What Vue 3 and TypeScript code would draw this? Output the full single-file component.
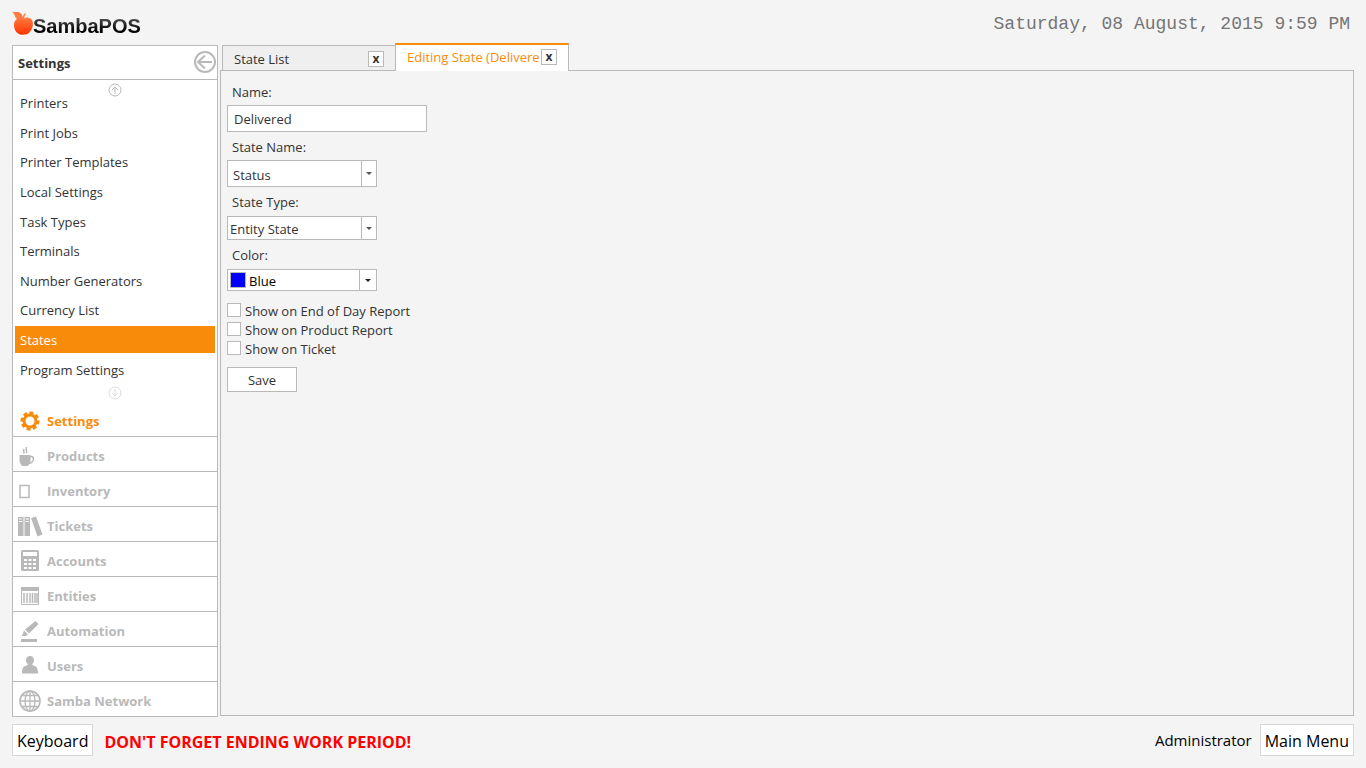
<script setup lang="ts">
import { ref } from 'vue'

interface Option { label: string; checked: boolean }

const settings: string[] = [
  'Printers', 'Print Jobs', 'Printer Templates', 'Local Settings', 'Task Types',
  'Terminals', 'Number Generators', 'Currency List', 'States', 'Program Settings',
]
const selected = ref('States')

const sections: string[] = [
  'Settings', 'Products', 'Inventory', 'Tickets', 'Accounts',
  'Entities', 'Automation', 'Users', 'Samba Network',
]
const section = ref('Settings')

const name = ref('Delivered')
const stateName = ref('Status')
const stateType = ref('Entity State')
const color = ref('Blue')
const options = ref<Option[]>([
  { label: 'Show on End of Day Report', checked: false },
  { label: 'Show on Product Report', checked: false },
  { label: 'Show on Ticket', checked: false },
])
</script>

<template>
  <div class="page">
    <header class="top">
      <div class="logo">
        <svg class="apple" width="24" height="26" viewBox="0 0 24 26" aria-hidden="true">
          <defs>
            <linearGradient id="fruit" x1="0" y1="0" x2="0" y2="1">
              <stop offset="0" stop-color="#ff7a40" />
              <stop offset="1" stop-color="#ff3300" />
            </linearGradient>
          </defs>
          <path d="M0 .5C2.500 1.500 6.500 0 9 2.500c1.500 1.500 2 3.500 2.200 6C8 9.500 4 8.500 3 5.500 2.500 3.500 1.500 2 0 .5z" fill="#ff7a45" />
          <path d="M11.500 8.500C11.500 5 12 3.500 13.500 2.500" fill="none" stroke="#ff7a45" stroke-width="1.500" />
          <path d="M11.500 8C14 5.500 18.500 6 20.300 9.500c1.500 4.500 0 9.500-3.500 12.500-1.500 1.200-2.500 1.500-3.800 1.500s-1.500.3-2.500.3-2-.3-3-.6C4 22 1.800 17.500 2 13.500c.5-5 5-8 9.500-5.500z" fill="url(#fruit)" />
        </svg>
        <span class="brand">SambaPOS</span>
      </div>
      <time class="clock" datetime="2015-08-08T21:59">Saturday, 08 August, 2015 9:59 PM</time>
    </header>

    <main class="body">
      <aside class="sidebar">
        <div class="side-head">
          <h1>Settings</h1>
          <button class="plain" type="button" aria-label="Back">
            <svg width="24" height="24" viewBox="0 0 24 24" fill="none" stroke="#b9b9b9" stroke-width="2">
              <circle cx="12" cy="11" r="10" /><path d="M19 11H5.500M12 4.500 5 11l7 6.500" />
            </svg>
          </button>
        </div>
        <div class="scroller">
          <button class="plain scroll" type="button" aria-label="Scroll up">
            <svg width="14" height="14" viewBox="0 0 14 14" fill="none" stroke="#b9b9b9">
              <circle cx="7" cy="7" r="6" /><path d="M7 11V4M4 7l3-3 3 3" />
            </svg>
          </button>
          <div class="viewport">
            <ul class="items">
              <li v-for="item in settings" :key="item">
                <button type="button" class="item" :class="{ active: item === selected }" @click="selected = item">{{ item }}</button>
              </li>
            </ul>
          </div>
          <button class="plain scroll down" type="button" aria-label="Scroll down">
            <svg width="14" height="14" viewBox="0 0 14 14" fill="none" stroke="#dcdcdc">
              <circle cx="7" cy="7" r="6" /><path d="M7 3v7M4 7l3 3 3-3" />
            </svg>
          </button>
        </div>
        <nav class="sections">
          <button v-for="s in sections" :key="s" type="button" class="section" :class="{ active: s === section }" @click="section = s">
            <svg class="icon" width="28" height="24" viewBox="0 0 28 24" aria-hidden="true">
              <g v-if="s === 'Settings'" fill="none" stroke="currentColor">
                <circle cx="14" cy="12" r="6" stroke-width="3" />
                <path d="M14 5.500V2.500M14 18.500v3M7.500 12h-3M20.500 12h3M9.400 7.400 7.300 5.300M18.600 16.600l2.100 2.100M18.600 7.400l2.100-2.100M9.400 16.600l-2.100 2.100" stroke-width="4" transform="rotate(10 14 12)" />
              </g>
              <g v-else-if="s === 'Products'">
                <path d="M3.500 11h11v5c0 3-1.500 5-3 6h-5c-1.500-1-3-3-3-6z" fill="currentColor" />
                <path d="M14 12.500h1.500c2.600 0 2.600 4.500 0 6-1 .8-2 1-3 1M7.500 9.500c1.500-2-1-2.500.5-4.500M10 9c2-2.500-1-3 .5-6" fill="none" stroke="currentColor" stroke-width="1.500" />
              </g>
              <path v-else-if="s === 'Inventory'" d="M4 6.500h9v12H4z" fill="none" stroke="currentColor" stroke-width="1.500" />
              <g v-else-if="s === 'Tickets'">
                <path d="M2 3h5.500v19H2zM8.500 3H14v19H8.500zM15 4l5-1.500 6.500 18-5 2z" fill="currentColor" />
                <path d="M3 5h3M3 7.500h3M9.500 5H13M9.500 7.500H13" stroke="#fff" />
              </g>
              <g v-else-if="s === 'Accounts'">
                <path d="M6.500 1h15q1.500 0 1.500 1.500v18q0 1.500-1.500 1.500h-15Q5 22 5 20.500v-18Q5 1 6.500 1z" fill="currentColor" />
                <path d="M7 3h14v4H7zM8 10h3v2H8zM12.500 10h3v2h-3zM17 10h3v2h-3zM8 14h3v2H8zM12.500 14h3v2h-3zM17 14h3v2h-3zM8 18h3v2H8zM12.500 18h3v2h-3zM17 18h3v2h-3z" fill="#fff" />
              </g>
              <g v-else-if="s === 'Entities'" fill="none" stroke="currentColor">
                <path d="M5.500 3.500h17v17h-17z" /><path d="M5 5h18" stroke-width="4" />
                <path d="M8 9v10M11 9v10M14 9v10M16.500 9v10M19 9v10M21 9v10" stroke-width="1.500" />
              </g>
              <path v-else-if="s === 'Automation'" d="m19.500 2 3 3L13 14.500l-4-4zM8 11.500l4 4-2 1.500H6.500l-.5-.5zM5 20h16v3H5z" fill="currentColor" />
              <path v-else-if="s === 'Users'" d="M14 2a4 4.300 0 0 1 2 8l1 1.500c4 .5 5 3 5 8H6c0-5 1-7.500 5-8l1-1.500A4 4.300 0 0 1 14 2z" fill="currentColor" />
              <g v-else fill="none" stroke="currentColor" stroke-width="1.300">
                <circle cx="14" cy="12" r="10" stroke-width="1.600" /><ellipse cx="14" cy="12" rx="5" ry="10" />
                <path d="M14 2v20M4 12h20M5.500 6.500h17M5.500 17.500h17" />
              </g>
            </svg>
            <span>{{ s }}</span>
          </button>
        </nav>
      </aside>

      <section class="content">
        <div class="tabs">
          <div class="tab">
            <button type="button" class="tab-title">State List</button>
            <button type="button" class="close" aria-label="Close State List">x</button>
          </div>
          <div class="tab current">
            <button type="button" class="tab-title">Editing State (Delivered)</button>
            <button type="button" class="close" aria-label="Close Editing State">x</button>
          </div>
        </div>
        <form class="panel" @submit.prevent>
          <label class="caption" for="name">Name:</label>
          <input id="name" v-model="name" class="text" type="text">

          <label class="caption" for="state-name">State Name:</label>
          <div class="combo tall">
            <select id="state-name" v-model="stateName"><option>Status</option></select>
            <span class="drop"><i></i></span>
          </div>

          <label class="caption" for="state-type">State Type:</label>
          <div class="combo">
            <select id="state-type" v-model="stateType"><option>Entity State</option></select>
            <span class="drop"><i></i></span>
          </div>

          <label class="caption" for="color">Color:</label>
          <div class="combo color">
            <span class="swatch"></span>
            <select id="color" v-model="color"><option>Blue</option></select>
            <span class="drop"><i></i></span>
          </div>

          <div class="checks">
            <label v-for="o in options" :key="o.label" class="check">
              <input v-model="o.checked" type="checkbox">
              <span>{{ o.label }}</span>
            </label>
          </div>
          <button class="save" type="submit">Save</button>
        </form>
      </section>
    </main>

    <footer class="bottom">
      <button type="button" class="big">Keyboard</button>
      <strong class="warning">DON'T FORGET ENDING WORK PERIOD!</strong>
      <span class="user">Administrator</span>
      <button type="button" class="big">Main Menu</button>
    </footer>
  </div>
</template>

<style>
body { background: #f4f4f4; }
</style>

<style scoped>
* { box-sizing: border-box; }
.page {
  min-height: 100vh;
  display: flex;
  flex-direction: column;
  padding: 0 12px;
  background: #f4f4f4;
  color: #333;
  font: 13px/18px "Open Sans", "Noto Sans", sans-serif;
}
button, input, select { font: inherit; color: inherit; margin: 0; border-radius: 0; }
button { padding: 0; cursor: pointer; }
.plain { border: 0; background: none; display: flex; align-items: center; justify-content: center; }

.top { height: 43px; display: flex; justify-content: space-between; align-items: center; }
.logo { display: flex; align-items: center; padding-top: 4px; }
.apple { margin-right: -3px; }
.brand {
  font: bold 20px/24px "Liberation Sans", Arial, sans-serif;
  padding-top: 4px;
  background: linear-gradient(#555 25%, #000 75%);
  background-clip: text;
  color: transparent;
}
.clock { font: 18px/24px "Liberation Mono", monospace; color: #757575; padding: 4px 4px 0 0; }

.body { flex: 1; display: flex; gap: 2px; }
.sidebar {
  width: 206px;
  margin-top: 2px;
  display: flex;
  flex-direction: column;
  border: 1px solid #b9b9b9;
  border-bottom: 0;
  background: #fff;
}
.side-head {
  height: 34px;
  display: flex;
  align-items: center;
  justify-content: space-between;
  padding: 0 0 0 5px;
  border-bottom: 1px solid #b9b9b9;
}
h1 { margin: 0; font-size: 13px; line-height: 18px; font-weight: 700; }
.scroller { flex: 1; display: flex; flex-direction: column; }
.scroll { height: 19px; }
.scroll.down { height: 18px; }
.viewport { flex: 1 0 284px; height: 284px; overflow: hidden; display: flex; flex-direction: column; justify-content: flex-end; }
.items { list-style: none; margin: 0; padding: 0; flex: none; height: 296px; display: flex; flex-direction: column; }
.items li { flex: 1; padding: 1px 2px; display: flex; }
.item { flex: 1; border: 0; background: none; text-align: left; padding: 1px 5px 0; }
.item.active { background: #f88c0a; color: #fff; }
.section {
  width: 100%;
  height: 35px;
  display: flex;
  align-items: center;
  gap: 3px;
  border: 0;
  border-bottom: 1px solid #b9b9b9;
  background: #fff;
  color: #b9b9b9;
  padding: 4px 3px 0;
  font-weight: 700;
}
.section.active { color: #f88c0a; }

.content { flex: 1; min-width: 0; display: flex; flex-direction: column; padding-bottom: 1px; }
.tabs { display: flex; align-items: flex-end; height: 28px; padding-left: 2px; margin-bottom: -1px; }
.tab {
  width: 173px;
  height: 26px;
  display: flex;
  align-items: center;
  padding: 2px 11px 0 11px;
  border: 1px solid #b9b9b9;
  border-right: 0;
  background: #efefef;
}
.tab.current {
  width: 174px;
  height: 28px;
  padding: 0 11px 2px 11px;
  border: 1px solid #b9b9b9;
  border-top: 2px solid #f88c0a;
  border-bottom: 0;
  background: #fff;
  color: #f88c0a;
  z-index: 1;
}
.tab-title { flex: 1; min-width: 0; border: 0; background: none; text-align: left; overflow: hidden; white-space: nowrap; }
.current .tab-title { margin-right: 2px; }
.close {
  flex: none;
  width: 16px;
  height: 16px;
  border: 1px solid #b9b9b9;
  background: #fff;
  color: #333;
  font-size: 12px;
  line-height: 12px;
  font-weight: 700;
}
.panel {
  flex: 1;
  display: flex;
  flex-direction: column;
  align-items: flex-start;
  padding: 12px 6px;
  border: 1px solid #b9b9b9;
}
.caption { padding-left: 5px; margin-bottom: 4px; }
.text { width: 200px; height: 27px; padding: 1px 6px 0; border: 1px solid #b9b9b9; background: #fff; margin-bottom: 6px; }
.combo { display: flex; width: 150px; height: 24px; border: 1px solid #b9b9b9; background: #fff; margin: 1px 0 6px; }
.combo.tall { height: 27px; margin-top: 0; }
.combo.color { height: 22px; color: #000; margin: 1px 0 9px; }
select { flex: 1; min-width: 0; appearance: none; border: 0; background: none; padding: 2px 2px 0; outline: 0; }
.tall select { padding-left: 5px; }
.color select { padding-left: 3px; }
.drop { width: 15px; border-left: 1px solid #b9b9b9; display: flex; align-items: center; justify-content: center; pointer-events: none; }
.color .drop { width: 17px; }
.drop i { border: 3px solid transparent; border-top-color: #555; border-bottom: 0; }
.color .drop i { border-top-color: #222; }
.swatch { width: 16px; height: 16px; margin: 2px 0 0 2px; background: #00f; border: 1px solid #b9b9b9; }
.check { display: flex; align-items: center; gap: 4px; height: 19px; }
.check input { appearance: none; width: 14px; height: 14px; border: 1px solid #b9b9b9; background: #fff; }
.check span { padding-top: 2px; }
.save { width: 70px; height: 25px; margin-top: 10px; border: 1px solid #b9b9b9; background: #fff; }

.bottom { display: flex; align-items: center; height: 51px; padding-bottom: 5px; color: #000; }
.big { height: 32px; padding: 1px 4px 0; border: 1px solid #d8d8d8; background: #fff; font-size: 16px; line-height: 22px; }
.warning { margin: 4px 0 0 11px; color: #f00; font-size: 16px; }
.user { margin: 0 8px 0 auto; font-size: 15px; }
</style>
